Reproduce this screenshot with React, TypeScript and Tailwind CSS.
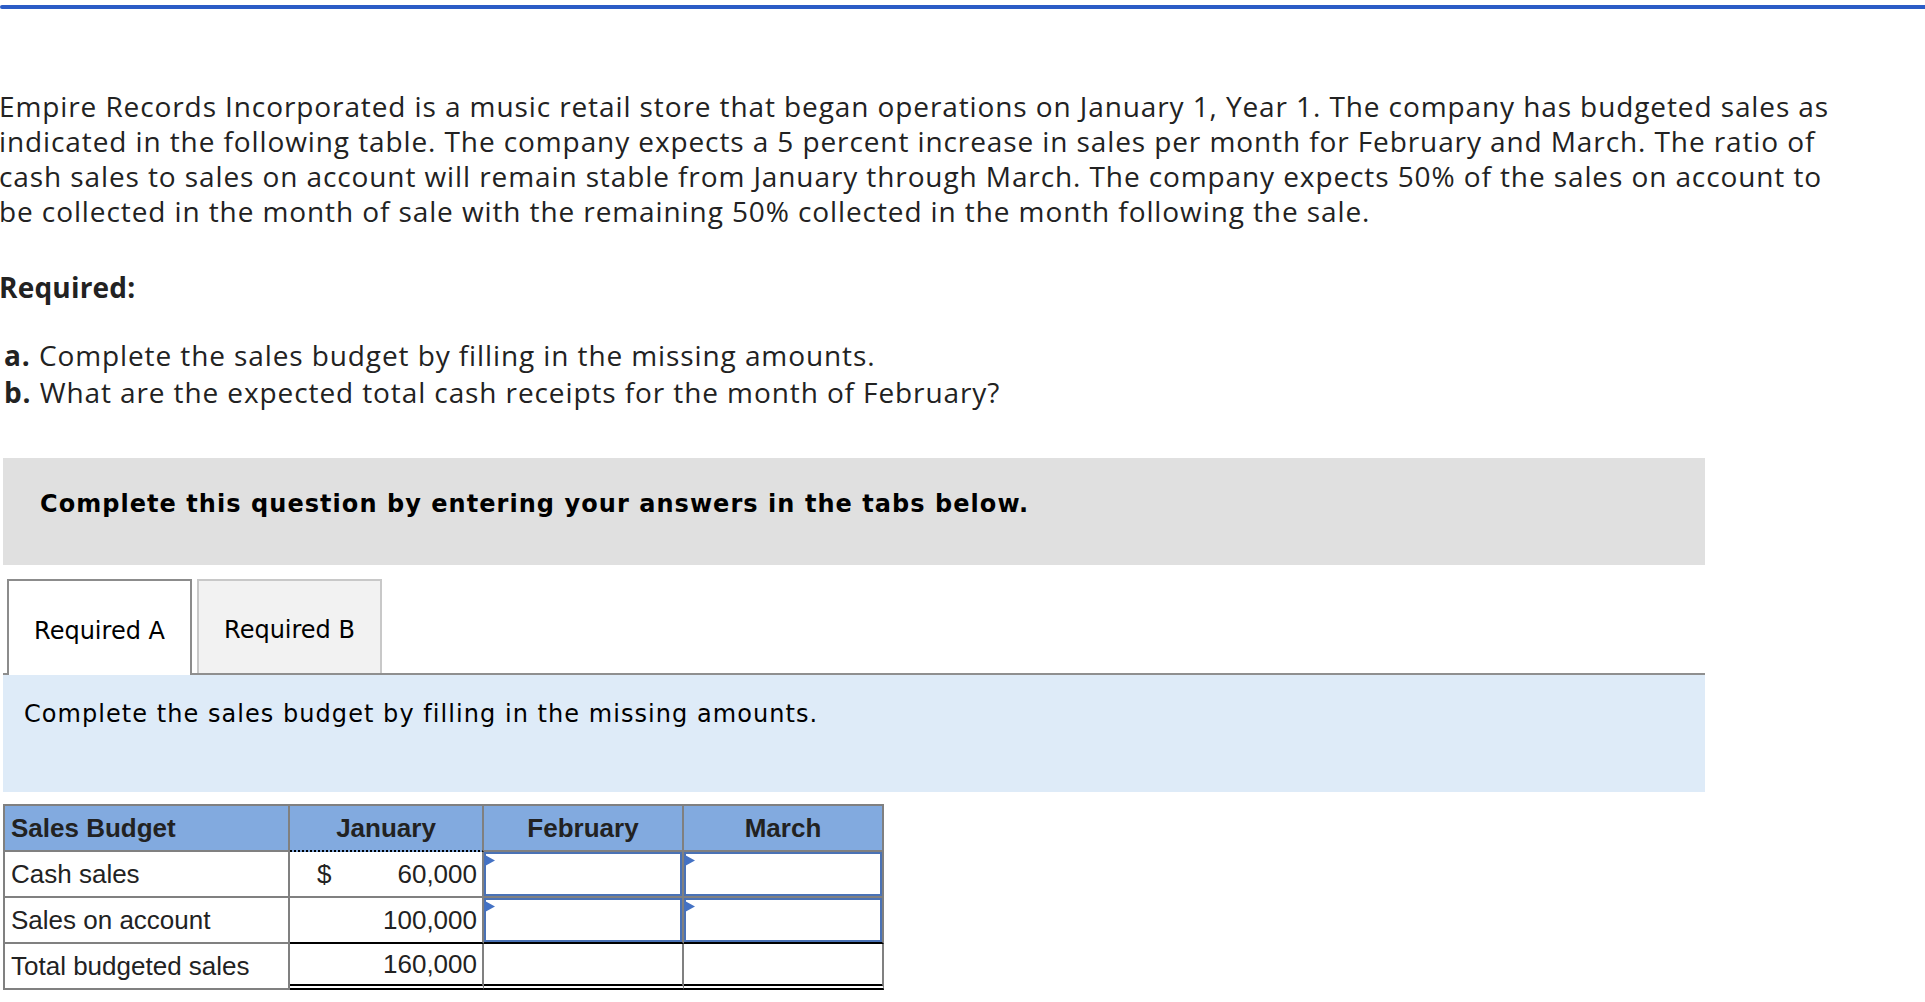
export default function App() {
  const grey = "border-[#808080]";
  const cell = `h-[46px] border-r-2 border-b-2 ${grey} flex items-center text-[26px] text-[#222] font-['Liberation_Sans',Arial,sans-serif]`;
  const head = `${cell} bg-[#82aadf] font-bold`;
  const body = "font-['Open_Sans',sans-serif] text-[28px] text-[#222]";

  const InputCell = ({ last }: { last?: boolean }) => (
    <div className={`${cell} ${last ? "border-b-black" : ""}`}>
      <div className="relative h-full w-full border-2 border-[#4a72b5] bg-white">
        <svg className="absolute left-[-1px] top-[1px]" width="10" height="11" viewBox="0 0 10 11">
          <polygon points="0,0 10,5.5 0,11" fill="#4472c4" />
        </svg>
      </div>
    </div>
  );

  return (
    <div className="min-h-screen overflow-hidden bg-white pt-[5px] text-[#222]">
      <div className="h-[4px] rounded-l-[2px] bg-[#2b5cc6]" />

      <p className={`mt-[80px] ml-[-1px] whitespace-nowrap leading-[35px] tracking-[0.9px] ${body}`}>
        Empire Records Incorporated is a music retail store that began operations on January 1, Year 1. The company has budgeted sales as
        <br />
        indicated in the following table. The company expects a 5 percent increase in sales per month for February and March. The ratio of
        <br />
        cash sales to sales on account will remain stable from January through March. The company expects 50% of the sales on account to
        <br />
        be collected in the month of sale with the remaining 50% collected in the month following the sale.
      </p>

      <p className={`mt-[41px] ml-[-1px] font-bold leading-[35px] tracking-[0.2px] ${body}`}>Required:</p>

      <div className={`mt-[32px] pl-[4px] leading-[37px] tracking-[0.9px] ${body}`}>
        <p>
          <span className="font-bold">a.</span> Complete the sales budget by filling in the missing amounts.
        </p>
        <p>
          <span className="font-bold">b.</span> What are the expected total cash receipts for the month of February?
        </p>
      </div>

      <div className="ml-[3px] w-[1702px] font-['DejaVu_Sans',Verdana,sans-serif]">
        <div className="mt-[47px] h-[107px] bg-[#e0e0e0] pl-[37px] pt-[28px] text-[24px] font-bold tracking-[1.05px] text-black">
          Complete this question by entering your answers in the tabs below.
        </div>

        <div className="mt-[14px] flex items-end gap-[5px] border-b-2 border-[#8f8f8f] pl-[4px]">
          <div className="relative z-10 mb-[-2px] flex h-[96px] w-[185px] items-center justify-center border-x-2 border-t-2 border-[#8c8c8c] bg-white pt-[5px] text-[24px] text-black">
            Required A
          </div>
          <div className="flex h-[94px] w-[185px] items-center justify-center border-x-2 border-t-2 border-[#c8c8c8] bg-[#f2f2f2] pt-[5px] text-[24px] text-black">
            Required B
          </div>
        </div>

        <div className="h-[117px] bg-[#deebf8] pl-[21px] pt-[21px] text-[24px] tracking-[1.05px] text-black">
          Complete the sales budget by filling in the missing amounts.
        </div>

        <div className={`mt-[12px] grid w-[881px] grid-cols-[285px_194px_200px_200px] border-l-2 border-t-2 ${grey}`}>
          <div className={`${head} pl-[6px]`}>Sales Budget</div>
          <div className={`${head} justify-center border-b-black [border-bottom-style:dotted]`}>January</div>
          <div className={`${head} justify-center`}>February</div>
          <div className={`${head} justify-center`}>March</div>

          <div className={`${cell} pl-[6px]`}>Cash sales</div>
          <div className={`${cell} justify-between pl-[27px] pr-[5px]`}>
            <span>$</span>
            <span>60,000</span>
          </div>
          <InputCell />
          <InputCell />

          <div className={`${cell} pl-[6px]`}>Sales on account</div>
          <div className={`${cell} justify-end border-b-black pr-[5px]`}>100,000</div>
          <InputCell last />
          <InputCell last />

          <div className={`${cell} pl-[6px]`}>Total budgeted sales</div>
          <div className={`${cell} justify-end border-b-[6px] border-b-black pr-[5px] [border-bottom-style:double]`}>160,000</div>
          <div className={`${cell} border-b-[6px] border-b-black [border-bottom-style:double]`} />
          <div className={`${cell} border-b-[6px] border-b-black [border-bottom-style:double]`} />
        </div>
      </div>
    </div>
  );
}
